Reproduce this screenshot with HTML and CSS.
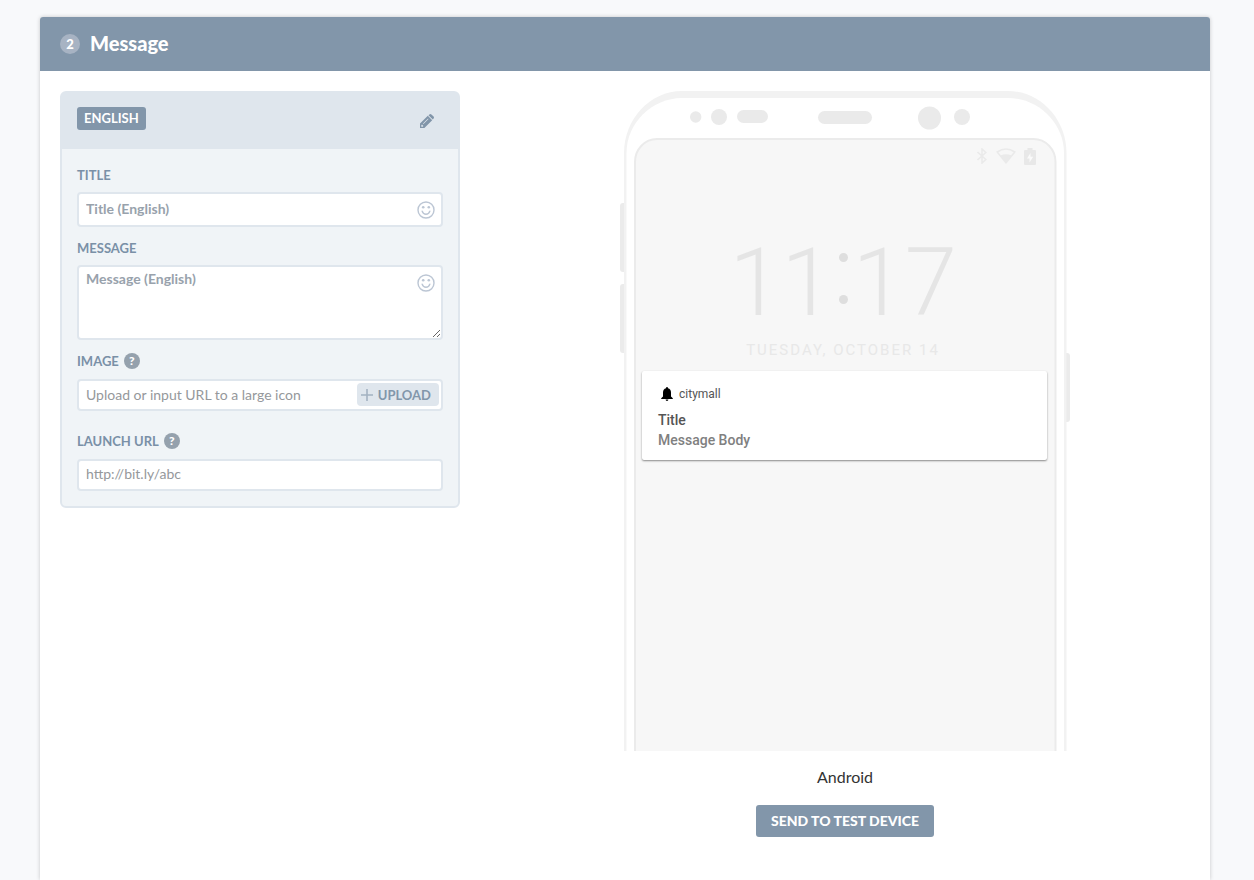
FILE: index.html
```
<!DOCTYPE html>
<html lang="en">
<head>
    <meta charset="UTF-8">
    <meta name="viewport" content="width=device-width, initial-scale=1.0">
    <title>New Push - Message</title>
    <link rel="stylesheet" href="styles.css">
</head>
<body>

    <section class="card">
        <header class="card-header">
            <span class="step">2</span>
            <h2>Message</h2>
        </header>

        <div class="card-body">
            <!-- Message form -->
            <form class="composer">
                <div class="composer-header">
                    <span class="badge">ENGLISH</span>
                    <button type="button" class="icon-button" aria-label="Edit languages">
                        <svg width="14" height="14" viewBox="0 0 14 14">
                            <path fill="#8195a9" fill-rule="evenodd" d="M0 14V9.600L7.800 1.800 12.200 6.200 4.400 14ZM1.300 11.300V12.700H2.700L3.400 12 2 10.600ZM3 9.400 3.500 9.900 8.500 4.900 8 4.400ZM8.500 1.200 9.400.4Q10.400-.4 11.400.4L13.600 2.600Q14.400 3.600 13.600 4.600L12.800 5.500Z"/>
                        </svg>
                    </button>
                </div>

                <div class="composer-body">
                    <div class="field">
                        <div class="label-row"><label for="title">TITLE</label></div>
                        <div class="control">
                            <input class="input input-tall" type="text" id="title" placeholder="Title (English)">
                            <button type="button" class="icon-button emoji" aria-label="Insert emoji">
                                <svg width="18" height="18" viewBox="0 0 18 18">
                                    <circle cx="9" cy="9" r="8" fill="none" stroke="#bcc6d4" stroke-width="1.4"/>
                                    <circle cx="6.2" cy="6.2" r="1.3" fill="#bcc6d4"/>
                                    <circle cx="11.8" cy="6.2" r="1.3" fill="#bcc6d4"/>
                                    <path d="M5.200 10.200Q6.200 13.200 9 13.200T12.800 10.200" fill="none" stroke="#bcc6d4" stroke-width="1.4" stroke-linecap="round"/>
                                </svg>
                            </button>
                        </div>
                    </div>

                    <div class="field">
                        <div class="label-row"><label for="message">MESSAGE</label></div>
                        <div class="control">
                            <textarea class="input" id="message" placeholder="Message (English)"></textarea>
                            <button type="button" class="icon-button emoji" aria-label="Insert emoji">
                                <svg width="18" height="18" viewBox="0 0 18 18">
                                    <circle cx="9" cy="9" r="8" fill="none" stroke="#bcc6d4" stroke-width="1.4"/>
                                    <circle cx="6.2" cy="6.2" r="1.3" fill="#bcc6d4"/>
                                    <circle cx="11.8" cy="6.2" r="1.3" fill="#bcc6d4"/>
                                    <path d="M5.200 10.200Q6.200 13.200 9 13.200T12.800 10.200" fill="none" stroke="#bcc6d4" stroke-width="1.4" stroke-linecap="round"/>
                                </svg>
                            </button>
                        </div>
                    </div>

                    <div class="field field-url">
                        <div class="label-row">
                            <label for="image">IMAGE</label>
                            <span class="help">?</span>
                        </div>
                        <div class="input input-group">
                            <input type="text" id="image" placeholder="Upload or input URL to a large icon">
                            <button type="button" class="upload">
                                <svg width="12" height="12" viewBox="0 0 12 12">
                                    <path d="M6 0V12M0 6H12" stroke="#a3b2c1" stroke-width="1.6"/>
                                </svg>
                                UPLOAD
                            </button>
                        </div>
                    </div>

                    <div class="field field-url">
                        <div class="label-row">
                            <label for="launchUrl">LAUNCH URL</label>
                            <span class="help">?</span>
                        </div>
                        <input class="input" type="text" id="launchUrl" placeholder="http://bit.ly/abc">
                    </div>
                </div>
            </form>

            <!-- Device preview -->
            <div class="preview">
                <div class="phone">
                    <svg class="phone-frame" width="450" height="660" viewBox="0 0 450 660">
                        <g fill="#ebebeb">
                            <rect x="0" y="112" width="8" height="69" rx="3"/>
                            <rect x="0" y="193" width="8" height="69" rx="3"/>
                            <rect x="442" y="262" width="8" height="69" rx="3"/>
                        </g>
                        <path fill="#f2f2f2" d="M4 660V62C4 28 30 0 62 0H388C420 0 446.500 28 446.500 62V660Z"/>
                        <path fill="#fff" d="M6.500 660V62C6.500 32 32 7 62 7H388C418 7 444 32 444 62V660Z"/>
                        <g fill="#eaeaea">
                            <circle cx="75.700" cy="26" r="5.700"/>
                            <circle cx="99" cy="26" r="8"/>
                            <rect x="117" y="19" width="31" height="13" rx="6.500"/>
                            <rect x="198" y="20" width="54" height="13" rx="6.500"/>
                            <circle cx="309.500" cy="27" r="11.500"/>
                            <circle cx="342" cy="26" r="8"/>
                        </g>
                        <path fill="#f7f7f7" stroke="#ebebeb" stroke-width="2" d="M15 662V71A22 23 0 0 1 37 48H413.500A22 23 0 0 1 435.500 71V662"/>
                    </svg>

                    <div class="screen">
                        <div class="status-bar">
                            <svg width="12" height="16" viewBox="0 0 12 16">
                                <path d="M1.500 4 9.800 11.500 6 15V1L9.800 4.500 1.500 12" fill="none" stroke="#eaeaea" stroke-width="1.6"/>
                            </svg>
                            <svg width="20" height="16" viewBox="0 0 20 16">
                                <path d="M1.200 4Q10-2 18.800 4L10 14.800Z" fill="none" stroke="#eaeaea" stroke-width="1.600"/>
                                <path d="M4.500 7.500Q10 5 15.500 7.500L10 15Z" fill="#eaeaea"/>
                            </svg>
                            <svg width="12" height="18" viewBox="0 0 12 18">
                                <path d="M3.500 0H8.500V2H11Q12 2 12 3V16Q12 17 11 17H1Q0 17 0 16V3Q0 2 1 2H3.500Z" fill="#e8e8e8"/>
                                <path d="M6.500 5 3 10.500H5.500V14.500L9.200 8.800H6.500Z" fill="#fafafa"/>
                            </svg>
                        </div>

                        <div class="clock">
                            <span>11</span>
                            <span class="colon"></span>
                            <span>17</span>
                        </div>
                        <p class="date">TUESDAY, OCTOBER 14</p>

                        <div class="notification">
                            <div class="app-name">
                                <svg width="12" height="14" viewBox="0 0 12 14">
                                    <path d="M6 0Q7 0 7 1.200 10 2 10 5.500V9.500L11.800 11.200V12H.2V11.200L2 9.500V5.500Q2 2 5 1.200 5 0 6 0ZM4.600 12.600H7.400Q7.400 14 6 14T4.600 12.600Z"/>
                                </svg>
                                <span>citymall</span>
                            </div>
                            <p class="push-title">Title</p>
                            <p class="push-body">Message Body</p>
                        </div>
                    </div>
                </div>

                <p class="device-name">Android</p>
                <button type="button" class="send-button">SEND TO TEST DEVICE</button>
            </div>
        </div>
    </section>

</body>
</html>
```

FILE: styles.css
```
* {
    box-sizing: border-box;
}
body {
    font-family: Lato, "Open Sans", sans-serif;
    font-size: 14px;
    background-color: #f8f9fb;
    margin: 0;
    padding: 17px 44px 0 40px;
}
h2, p {
    margin: 0;
}
button, input, textarea {
    font-family: inherit;
    font-size: 14px;
}
button {
    border: none;
    cursor: pointer;
}
svg {
    display: block;
}
.card {
    min-height: calc(100vh - 17px);
    background: #fff;
    border-radius: 3px 3px 0 0;
    box-shadow: 0 0 4px rgba(0, 0, 0, 0.2);
}
.card-header {
    display: flex;
    align-items: center;
    gap: 10px;
    height: 54px;
    padding: 0 20px;
    background-color: #8296aa;
    color: white;
    border-radius: 3px 3px 0 0;
}
.card-header h2 {
    padding-bottom: 2px;
    font-size: 20px;
    font-weight: 900;
}
.step {
    width: 20px;
    height: 20px;
    line-height: 20px;
    border-radius: 50%;
    background-color: #a7b3c3;
    font-size: 13px;
    font-weight: 900;
    text-align: center;
}
.card-body {
    display: flex;
    align-items: flex-start;
    gap: 20px;
    padding: 20px 0 43px 20px;
}

/* Form */
.composer {
    width: 400px;
    border: 2px solid #dfe6ed;
    border-radius: 6px;
    background-color: #f0f4f7;
}
.composer-header {
    display: flex;
    justify-content: space-between;
    align-items: flex-start;
    height: 56px;
    padding: 14px 15px;
    background-color: #dfe6ed;
}
.badge {
    padding: 0 7px;
    line-height: 23px;
    border-radius: 3px;
    background-color: #8296aa;
    color: white;
    font-size: 13px;
    font-weight: 700;
}
.icon-button {
    padding: 0;
    background: none;
}
.composer-header .icon-button {
    padding: 7px 9px;
}
.composer-body {
    padding: 16px 15px 15px;
}
.field {
    margin-bottom: 11px;
}
.field-url {
    margin-bottom: 20px;
}
.field:last-child {
    margin-bottom: 0;
}
.label-row {
    display: flex;
    align-items: center;
    gap: 5px;
    height: 20px;
    margin-bottom: 7px;
    color: #7a90a7;
    font-size: 13px;
    font-weight: 700;
}
.field-url .label-row {
    margin-bottom: 8px;
}
.help {
    width: 16px;
    height: 16px;
    line-height: 16px;
    border-radius: 50%;
    background-color: #95a1ad;
    color: white;
    font-size: 12px;
    font-weight: 900;
    text-align: center;
}
.control {
    position: relative;
}
.input {
    display: block;
    width: 100%;
    height: 32px;
    padding: 0 7px 3px;
    border: 2px solid #dfe6ed;
    border-radius: 4px;
    background: white;
    color: #333;
}
.input-tall {
    height: 35px;
}
textarea.input {
    height: 75px;
    padding: 3px 7px;
    line-height: 18px;
    resize: vertical;
}
.input::placeholder, .input-group input::placeholder {
    color: #95989b;
}
.control .input::placeholder {
    color: #98a2ac;
    font-weight: 700;
}
.emoji {
    position: absolute;
    top: 9px;
    right: 8px;
}
.input-group {
    display: flex;
    align-items: center;
    padding: 0 2px 1px 7px;
}
.input-group input {
    flex: 1;
    min-width: 0;
    padding: 0 0 1px;
    border: none;
    outline: none;
}
.upload {
    display: flex;
    align-items: center;
    gap: 5px;
    height: 23px;
    padding: 0 8px 0 4px;
    border-radius: 4px;
    background-color: #dfe6ed;
    color: #8296aa;
    font-size: 13px;
    font-weight: 700;
}

/* Preview */
.preview {
    flex: 1;
    display: flex;
    flex-direction: column;
    align-items: center;
}
.phone {
    position: relative;
    width: 450px;
    height: 660px;
    font-family: Roboto, sans-serif;
}
.phone-frame {
    position: absolute;
    top: 0;
    left: 0;
}
.screen {
    position: relative;
    padding: 57px 23px 0 22px;
}
.status-bar {
    display: flex;
    gap: 8px;
    height: 18px;
    justify-content: flex-end;
    padding-right: 11px;
}
.clock {
    display: flex;
    justify-content: center;
    align-items: center;
    gap: 5px;
    height: 110px;
    margin: 62px 3px 2px 0;
    color: #e5e5e5;
    font-size: 94px;
    font-weight: 300;
}
.colon {
    display: flex;
    flex-direction: column;
    gap: 33px;
    padding-bottom: 10px;
}
.colon::before, .colon::after {
    content: "";
    width: 9px;
    height: 9px;
    border-radius: 50%;
    background-color: #dedede;
}
.date {
    line-height: 20px;
    margin: 0 3px 11px 0;
    color: #e8e8e8;
    font-size: 15px;
    letter-spacing: 2px;
    text-align: center;
}
.notification {
    padding: 13px 16px 10px;
    border-radius: 2px;
    background: #fff;
    box-shadow: 0 1px 2px rgba(0, 0, 0, 0.45);
    line-height: 20px;
}
.app-name {
    display: flex;
    align-items: center;
    gap: 6px;
    margin-bottom: 6px;
    padding-left: 3px;
    color: #555;
    font-size: 12px;
}
.push-title {
    color: #555;
    font-weight: 500;
}
.push-body {
    color: #808080;
    font-weight: 500;
}
.device-name {
    margin: 16px 0 18px;
    line-height: 20px;
    color: #333;
    font-size: 16px;
}
.send-button {
    height: 32px;
    padding: 0 15px 2px;
    border-radius: 3px;
    background-color: #8296aa;
    color: white;
    font-weight: 900;
}
.send-button:hover {
    background-color: #6f859b;
}
```
